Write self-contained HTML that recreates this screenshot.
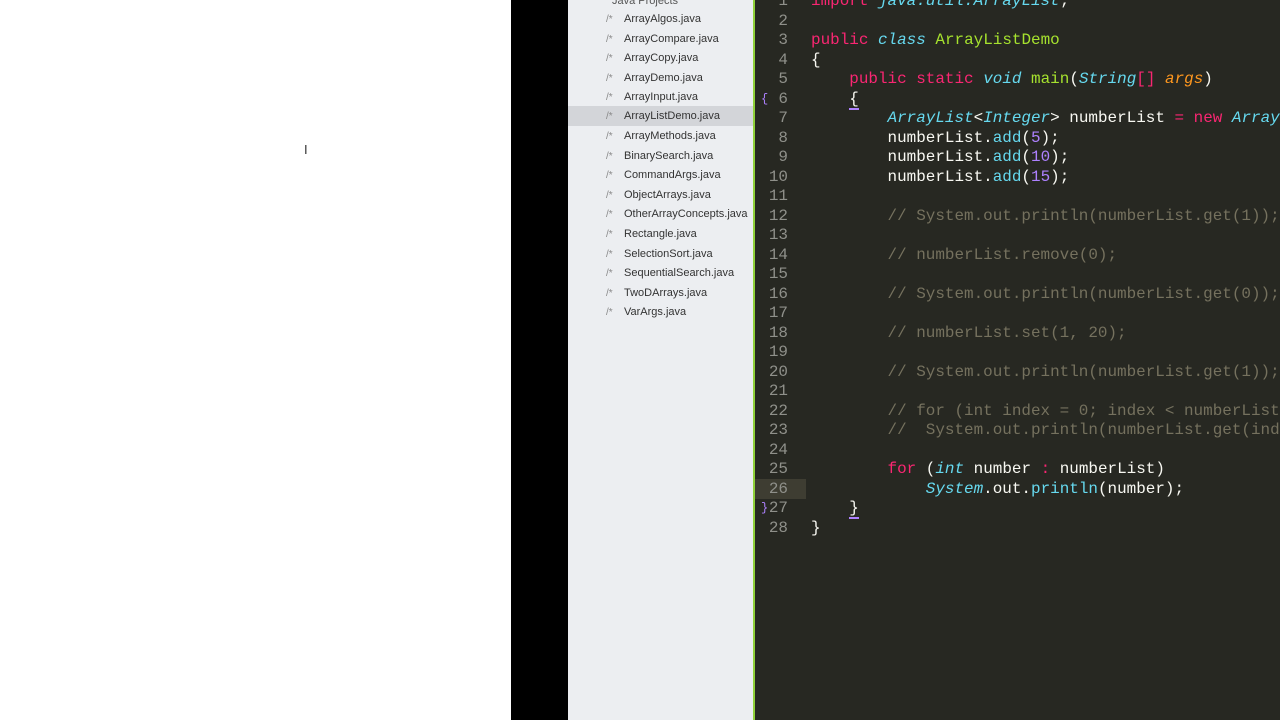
<!DOCTYPE html>
<html><head><meta charset="utf-8"><style>
*{margin:0;padding:0;box-sizing:border-box}
body{width:1280px;height:720px;overflow:hidden;background:#fff;position:relative;font-family:"Liberation Sans",sans-serif}
#blk{position:absolute;left:511px;top:0;width:57px;height:720px;background:#000}
#side{position:absolute;left:568px;top:0;width:185px;height:720px;background:#eceef1}
#grn{position:absolute;left:753px;top:0;width:2px;height:720px;background:#8fd13a}
#ed{position:absolute;left:755px;top:0;width:525px;height:720px;background:#272822;overflow:hidden}
.f{position:absolute;left:0;width:185px;height:19px;font-size:11px;color:#333;line-height:19px}
.f i{position:absolute;left:38px;color:#888;font-style:normal;font-size:10px}
.f span{position:absolute;left:56px}
.sel{background:#d3d5d9}
.l{position:absolute;left:0;height:19.5px;line-height:19.5px;font-family:"Liberation Mono",monospace;font-size:15.95px;white-space:pre;color:#f8f8f2}
.n{position:absolute;left:0;width:33px;text-align:right;color:#8f908a}
.c{position:absolute;left:56px}
.u{border-bottom:2px solid #ae81ff}
.k{color:#f92672}.t{color:#66d9ef;font-style:italic}.g{color:#a6e22e}.p{color:#ae81ff}.o{color:#fd971f;font-style:italic}.cm{color:#75715e}.b{color:#66d9ef}
.m{position:absolute;left:6px;color:#ae81ff;font-size:12px}
</style></head><body>
<div style="position:absolute;left:304px;top:143px;width:6px;height:14px;font-size:13px;color:#333;line-height:14px">I</div>
<div id="blk"></div>
<div id="side">
<div class="f" style="top:-8px"><span style="left:44px;color:#555">Java Projects</span></div>
<div class="f" style="top:10px"><i>/*</i><span>ArrayAlgos.java</span></div>
<div class="f" style="top:30px"><i>/*</i><span>ArrayCompare.java</span></div>
<div class="f" style="top:49px"><i>/*</i><span>ArrayCopy.java</span></div>
<div class="f" style="top:69px"><i>/*</i><span>ArrayDemo.java</span></div>
<div class="f" style="top:88px"><i>/*</i><span>ArrayInput.java</span></div>
<div class="f sel" style="top:106px;height:20px;line-height:21px"><i>/*</i><span>ArrayListDemo.java</span></div>
<div class="f" style="top:127px"><i>/*</i><span>ArrayMethods.java</span></div>
<div class="f" style="top:147px"><i>/*</i><span>BinarySearch.java</span></div>
<div class="f" style="top:166px"><i>/*</i><span>CommandArgs.java</span></div>
<div class="f" style="top:186px"><i>/*</i><span>ObjectArrays.java</span></div>
<div class="f" style="top:205px"><i>/*</i><span>OtherArrayConcepts.java</span></div>
<div class="f" style="top:225px"><i>/*</i><span>Rectangle.java</span></div>
<div class="f" style="top:245px"><i>/*</i><span>SelectionSort.java</span></div>
<div class="f" style="top:264px"><i>/*</i><span>SequentialSearch.java</span></div>
<div class="f" style="top:284px"><i>/*</i><span>TwoDArrays.java</span></div>
<div class="f" style="top:303px"><i>/*</i><span>VarArgs.java</span></div>
</div>
<div id="grn"></div>
<div id="ed">
<div style="position:absolute;left:0;top:479px;width:51px;height:20px;background:#3e3d32"></div>
<div class="l" style="top:-8px"><span class="n">1</span><span class="c"><span class="k">import</span> <span class="t">java.util.ArrayList</span>;</span></div>
<div class="l" style="top:11.5px"><span class="n">2</span></div>
<div class="l" style="top:31px"><span class="n">3</span><span class="c"><span class="k">public</span> <span class="t">class</span> <span class="g">ArrayListDemo</span></span></div>
<div class="l" style="top:50.5px"><span class="n">4</span><span class="c">{</span></div>
<div class="l" style="top:70px"><span class="n">5</span><span class="c">    <span class="k">public</span> <span class="k">static</span> <span class="t">void</span> <span class="g">main</span>(<span class="t">String</span><span class="k">[]</span> <span class="o">args</span>)</span></div>
<div class="l" style="top:89.5px"><span class="m">{</span><span class="n">6</span><span class="c">    <span class="u">{</span></span></div>
<div class="l" style="top:109px"><span class="n">7</span><span class="c">        <span class="t">ArrayList</span>&lt;<span class="t">Integer</span>&gt; numberList <span class="k">=</span> <span class="k">new</span> <span class="t">ArrayList</span>&lt;&gt;();</span></div>
<div class="l" style="top:128.5px"><span class="n">8</span><span class="c">        numberList.<span class="b">add</span>(<span class="p">5</span>);</span></div>
<div class="l" style="top:148px"><span class="n">9</span><span class="c">        numberList.<span class="b">add</span>(<span class="p">10</span>);</span></div>
<div class="l" style="top:167.5px"><span class="n">10</span><span class="c">        numberList.<span class="b">add</span>(<span class="p">15</span>);</span></div>
<div class="l" style="top:187px"><span class="n">11</span></div>
<div class="l" style="top:206.5px"><span class="n">12</span><span class="c cm">        // System.out.println(numberList.get(1));</span></div>
<div class="l" style="top:226px"><span class="n">13</span></div>
<div class="l" style="top:245.5px"><span class="n">14</span><span class="c cm">        // numberList.remove(0);</span></div>
<div class="l" style="top:265px"><span class="n">15</span></div>
<div class="l" style="top:284.5px"><span class="n">16</span><span class="c cm">        // System.out.println(numberList.get(0));</span></div>
<div class="l" style="top:304px"><span class="n">17</span></div>
<div class="l" style="top:323.5px"><span class="n">18</span><span class="c cm">        // numberList.set(1, 20);</span></div>
<div class="l" style="top:343px"><span class="n">19</span></div>
<div class="l" style="top:362.5px"><span class="n">20</span><span class="c cm">        // System.out.println(numberList.get(1));</span></div>
<div class="l" style="top:382px"><span class="n">21</span></div>
<div class="l" style="top:401.5px"><span class="n">22</span><span class="c cm">        // for (int index = 0; index &lt; numberList.size(); index++)</span></div>
<div class="l" style="top:421px"><span class="n">23</span><span class="c cm">        //  System.out.println(numberList.get(index));</span></div>
<div class="l" style="top:440.5px"><span class="n">24</span></div>
<div class="l" style="top:460px"><span class="n">25</span><span class="c">        <span class="k">for</span> (<span class="t">int</span> number <span class="k">:</span> numberList)</span></div>
<div class="l" style="top:479.5px"><span class="n">26</span><span class="c">            <span class="t">System</span>.out.<span class="b">println</span>(number);</span></div>
<div class="l" style="top:499px"><span class="m">}</span><span class="n">27</span><span class="c">    <span class="u">}</span></span></div>
<div class="l" style="top:518.5px"><span class="n">28</span><span class="c">}</span></div>
</div>
</body></html>
